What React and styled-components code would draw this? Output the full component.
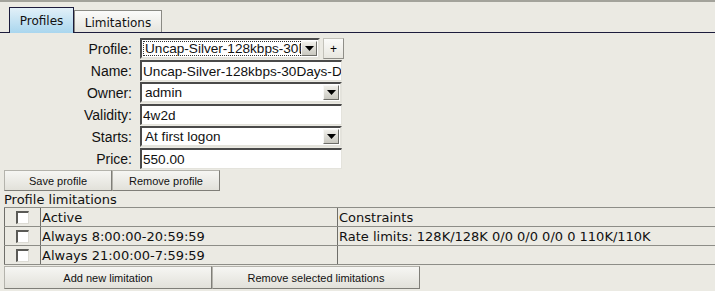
import styled, { createGlobalStyle } from 'styled-components'

const GlobalStyle = createGlobalStyle`
  html, body {
    margin: 0;
    padding: 0;
    background: #ebeae3;
  }
  body {
    font-family: "Liberation Sans", Arial, sans-serif;
  }
`

const limitations = [
  { id: 1, name: 'Always 8:00:00-20:59:59', constraints: 'Rate limits: 128K/128K 0/0 0/0 0/0 0 110K/110K' },
  { id: 2, name: 'Always 21:00:00-7:59:59', constraints: '' },
]

function Arrow() {
  return (
    <svg width="9" height="5" viewBox="0 0 9 5">
      <path d="M0 0 H9 L4.5 5 Z" fill="#000" />
    </svg>
  )
}

function Select({ value, focused }) {
  return (
    <SelectBox>
      <SelectValue $focused={focused}>{value}</SelectValue>
      <ArrowButton>
        <Arrow />
      </ArrowButton>
    </SelectBox>
  )
}

function App() {
  return (
    <Page>
      <GlobalStyle />
      <TabBar>
        <Tab $active>Profiles</Tab>
        <Tab>Limitations</Tab>
      </TabBar>

      <Form>
        <Label>Profile:</Label>
        <FieldRow>
          <ProfileSelect>
            <Select value="Uncap-Silver-128kbps-30Days-D" focused />
          </ProfileSelect>
          <PlusButton>+</PlusButton>
        </FieldRow>

        <Label>Name:</Label>
        <TextField>Uncap-Silver-128kbps-30Days-D</TextField>

        <Label>Owner:</Label>
        <Select value="admin" />

        <Label>Validity:</Label>
        <TextField>4w2d</TextField>

        <Label>Starts:</Label>
        <Select value="At first logon" />

        <Label>Price:</Label>
        <TextField>550.00</TextField>
      </Form>

      <ButtonRow>
        <Button $width={108}>Save profile</Button>
        <Button $width={108}>Remove profile</Button>
      </ButtonRow>

      <SectionTitle>Profile limitations</SectionTitle>

      <Table>
        <Row>
          <CheckCell><Check /></CheckCell>
          <Cell>Active</Cell>
          <Cell>Constraints</Cell>
        </Row>
        {limitations.map(item => (
          <Row key={item.id}>
            <CheckCell><Check /></CheckCell>
            <Cell>{item.name}</Cell>
            <Cell>{item.constraints}</Cell>
          </Row>
        ))}
      </Table>

      <ButtonRow>
        <Button $width={208} $height={23}>Add new limitation</Button>
        <Button $width={208} $height={23}>Remove selected limitations</Button>
      </ButtonRow>
    </Page>
  )
}

const Page = styled.div`
  width: 715px;
  height: 291px;
  overflow: hidden;
  border-top: 2px solid #a3a39b;
  box-sizing: border-box;
`

const TabBar = styled.div`
  display: flex;
  align-items: flex-end;
  padding-left: 9px;
  margin-top: 5px;
  height: 25px;
  border-bottom: 1px solid #1c1c3c;
`

const Tab = styled.div`
  box-sizing: border-box;
  height: ${p => (p.$active ? '26px' : '22px')};
  margin-bottom: ${p => (p.$active ? '-1px' : '0')};
  display: flex;
  align-items: center;
  justify-content: center;
  font-family: "DejaVu Sans", Verdana, sans-serif;
  font-size: 12px;
  color: #111;
  border: 1px solid ${p => (p.$active ? '#1c1c3c' : '#8a8a84')};
  border-bottom: none;
  background: ${p =>
    p.$active ? 'linear-gradient(#e2f0f8, #a9d6ee)' : 'linear-gradient(#fbfbfa, #e6e5de)'};
  width: ${p => (p.$active ? '65px' : '88px')};
  padding-top: ${p => (p.$active ? '0' : '2px')};
  z-index: ${p => (p.$active ? 1 : 0)};
`

const Form = styled.div`
  display: grid;
  grid-template-columns: 132px 202px;
  column-gap: 8px;
  row-gap: 1px;
  margin-top: 5px;
  grid-auto-rows: 21px;
`

const Label = styled.div`
  display: flex;
  align-items: center;
  justify-content: flex-end;
  font-size: 14px;
  color: #111;
`

const FieldRow = styled.div`
  display: flex;
  gap: 3px;
  width: 204px;
`

const ProfileSelect = styled.div`
  width: 180px;
  min-width: 0;
  flex: none;
  display: flex;
`

const SelectBox = styled.div`
  box-sizing: border-box;
  flex: 1;
  min-width: 0;
  height: 21px;
  display: flex;
  align-items: stretch;
  background: #fff;
  border: 2px solid #4a4a4a;
  border-right-color: #e4e3dc;
  border-bottom-color: #e4e3dc;
  padding: 1px;
`

const SelectValue = styled.div`
  flex: 1;
  min-width: 0;
  display: flex;
  align-items: center;
  padding-left: 2px;
  font-size: 13.6px;
  color: #111;
  white-space: nowrap;
  overflow: hidden;
  outline: ${p => (p.$focused ? '1px dotted #333' : 'none')};
  outline-offset: -1px;
`

const ArrowButton = styled.div`
  box-sizing: border-box;
  flex: none;
  width: 16px;
  display: flex;
  align-items: center;
  justify-content: center;
  background: linear-gradient(#f0efea, #c9c8c0);
  border: 1px solid #f8f8f6;
  border-right-color: #6d6d68;
  border-bottom-color: #6d6d68;
`

const PlusButton = styled.div`
  box-sizing: border-box;
  flex: none;
  width: 21px;
  height: 21px;
  display: flex;
  align-items: center;
  justify-content: center;
  font-size: 12px;
  background: linear-gradient(#fbfbf9, #e8e7e0);
  border: 1px solid #c3c2ba;
  border-right-color: #8f8e88;
  border-bottom-color: #8f8e88;
`

const TextField = styled.div`
  box-sizing: border-box;
  height: 21px;
  display: flex;
  align-items: center;
  padding-left: 1px;
  background: #fff;
  border: 2px solid #4a4a4a;
  border-right: 1px solid #e4e3dc;
  border-bottom: 1px solid #e4e3dc;
  font-size: 13.6px;
  color: #111;
  white-space: nowrap;
  overflow: hidden;
`

const ButtonRow = styled.div`
  display: flex;
  padding-left: 4px;
  margin-top: 1px;
`

const Button = styled.div`
  box-sizing: border-box;
  width: ${p => p.$width}px;
  height: ${p => p.$height || 21}px;
  display: flex;
  align-items: center;
  justify-content: center;
  font-size: 11px;
  color: #111;
  background: linear-gradient(#f6f6f3, #e2e1da);
  border: 1px solid #b4b3ac;
  border-right-color: #7f7e78;
  border-bottom-color: #7f7e78;
`

const SectionTitle = styled.div`
  font-family: "DejaVu Sans", Verdana, sans-serif;
  font-size: 13px;
  color: #111;
  padding-left: 4px;
  height: 16px;
  line-height: 17px;
`

const Table = styled.div`
  margin-left: 4px;
  border-top: 1px solid #8d8d87;
`

const Row = styled.div`
  display: grid;
  grid-template-columns: 36px 297px 1fr;
  height: 18px;
  border-bottom: 1px solid #8d8d87;
`

const Cell = styled.div`
  display: flex;
  align-items: center;
  padding-left: 1px;
  border-left: 1px solid #6e6e69;
  font-family: "DejaVu Sans", Verdana, sans-serif;
  font-size: 13px;
  color: #111;
  white-space: nowrap;
  overflow: hidden;
`

const CheckCell = styled.div`
  display: flex;
  align-items: center;
  justify-content: center;
  border-left: 1px solid #6e6e69;
`

const Check = styled.div`
  box-sizing: border-box;
  width: 13px;
  height: 13px;
  background: #fff;
  border: 2px solid #5a5a56;
  border-right: 1px solid #dcdbd4;
  border-bottom: 1px solid #dcdbd4;
`

export default App
